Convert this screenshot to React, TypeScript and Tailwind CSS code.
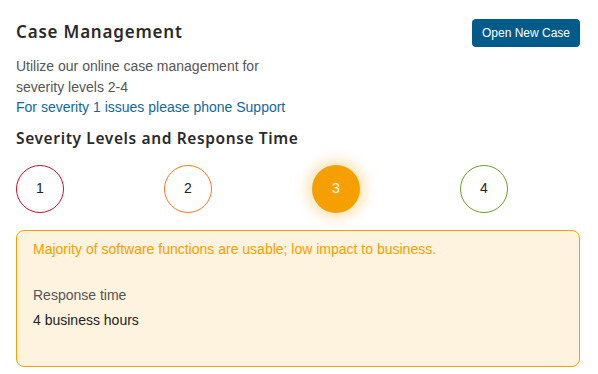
import React from "react";

export default function App() {
  const levels = [
    { n: 1, cls: "border border-[#c8102e] text-[#222]" },
    { n: 2, cls: "border border-[#f47b20] text-[#222]" },
    { n: 3, cls: "bg-[#f5a000] text-white shadow-[0_0_12px_6px_rgba(245,160,0,0.25)]" },
    { n: 4, cls: "border border-[#6a9f2a] text-[#222]" },
  ];
  return (
    <div className="w-[598px] h-[374px] bg-white pl-4 pr-[18px] pt-[19px] font-['Liberation_Sans',Arial,sans-serif]">
      <div className="flex items-start justify-between">
        <h1 className="mt-[2px] text-[17px] leading-[22px] font-semibold text-[#2a2a2a] font-['Noto_Sans',sans-serif] tracking-[0.8px]">
          Case Management
        </h1>
        <button className="h-[28px] px-[10px] rounded-[4px] bg-[#005b8a] text-white text-[12px] leading-[28px]">
          Open New Case
        </button>
      </div>
      <div className="mt-[9px] text-[14px] leading-[20.5px] text-[#555]">
        <p className="w-[270px]">Utilize our online case management for severity levels 2-4</p>
        <p className="text-[#10699a]">For severity 1 issues please phone Support</p>
      </div>
      <h2 className="mt-[10px] text-[15.5px] leading-[20px] font-semibold text-[#2a2a2a] font-['Noto_Sans',sans-serif] tracking-[0.62px]">
        Severity Levels and Response Time
      </h2>
      <div className="mt-[17px] flex gap-[100px]">
        {levels.map((l) => (
          <div
            key={l.n}
            className={`w-[48px] h-[48px] rounded-full flex items-center justify-center text-[14px] ${l.cls}`}
          >
            {l.n}
          </div>
        ))}
      </div>
      <div className="mt-[17px] h-[137px] rounded-[8px] border border-[#f5a000] bg-[#fef3df] px-4 pt-[8px] text-[14px] leading-[20px]">
        <p className="text-[#f5a000]">Majority of software functions are usable; low impact to business.</p>
        <p className="mt-[26px] text-[#555]">Response time</p>
        <p className="mt-[5px] text-[#222]">4 business hours</p>
      </div>
    </div>
  );
}
